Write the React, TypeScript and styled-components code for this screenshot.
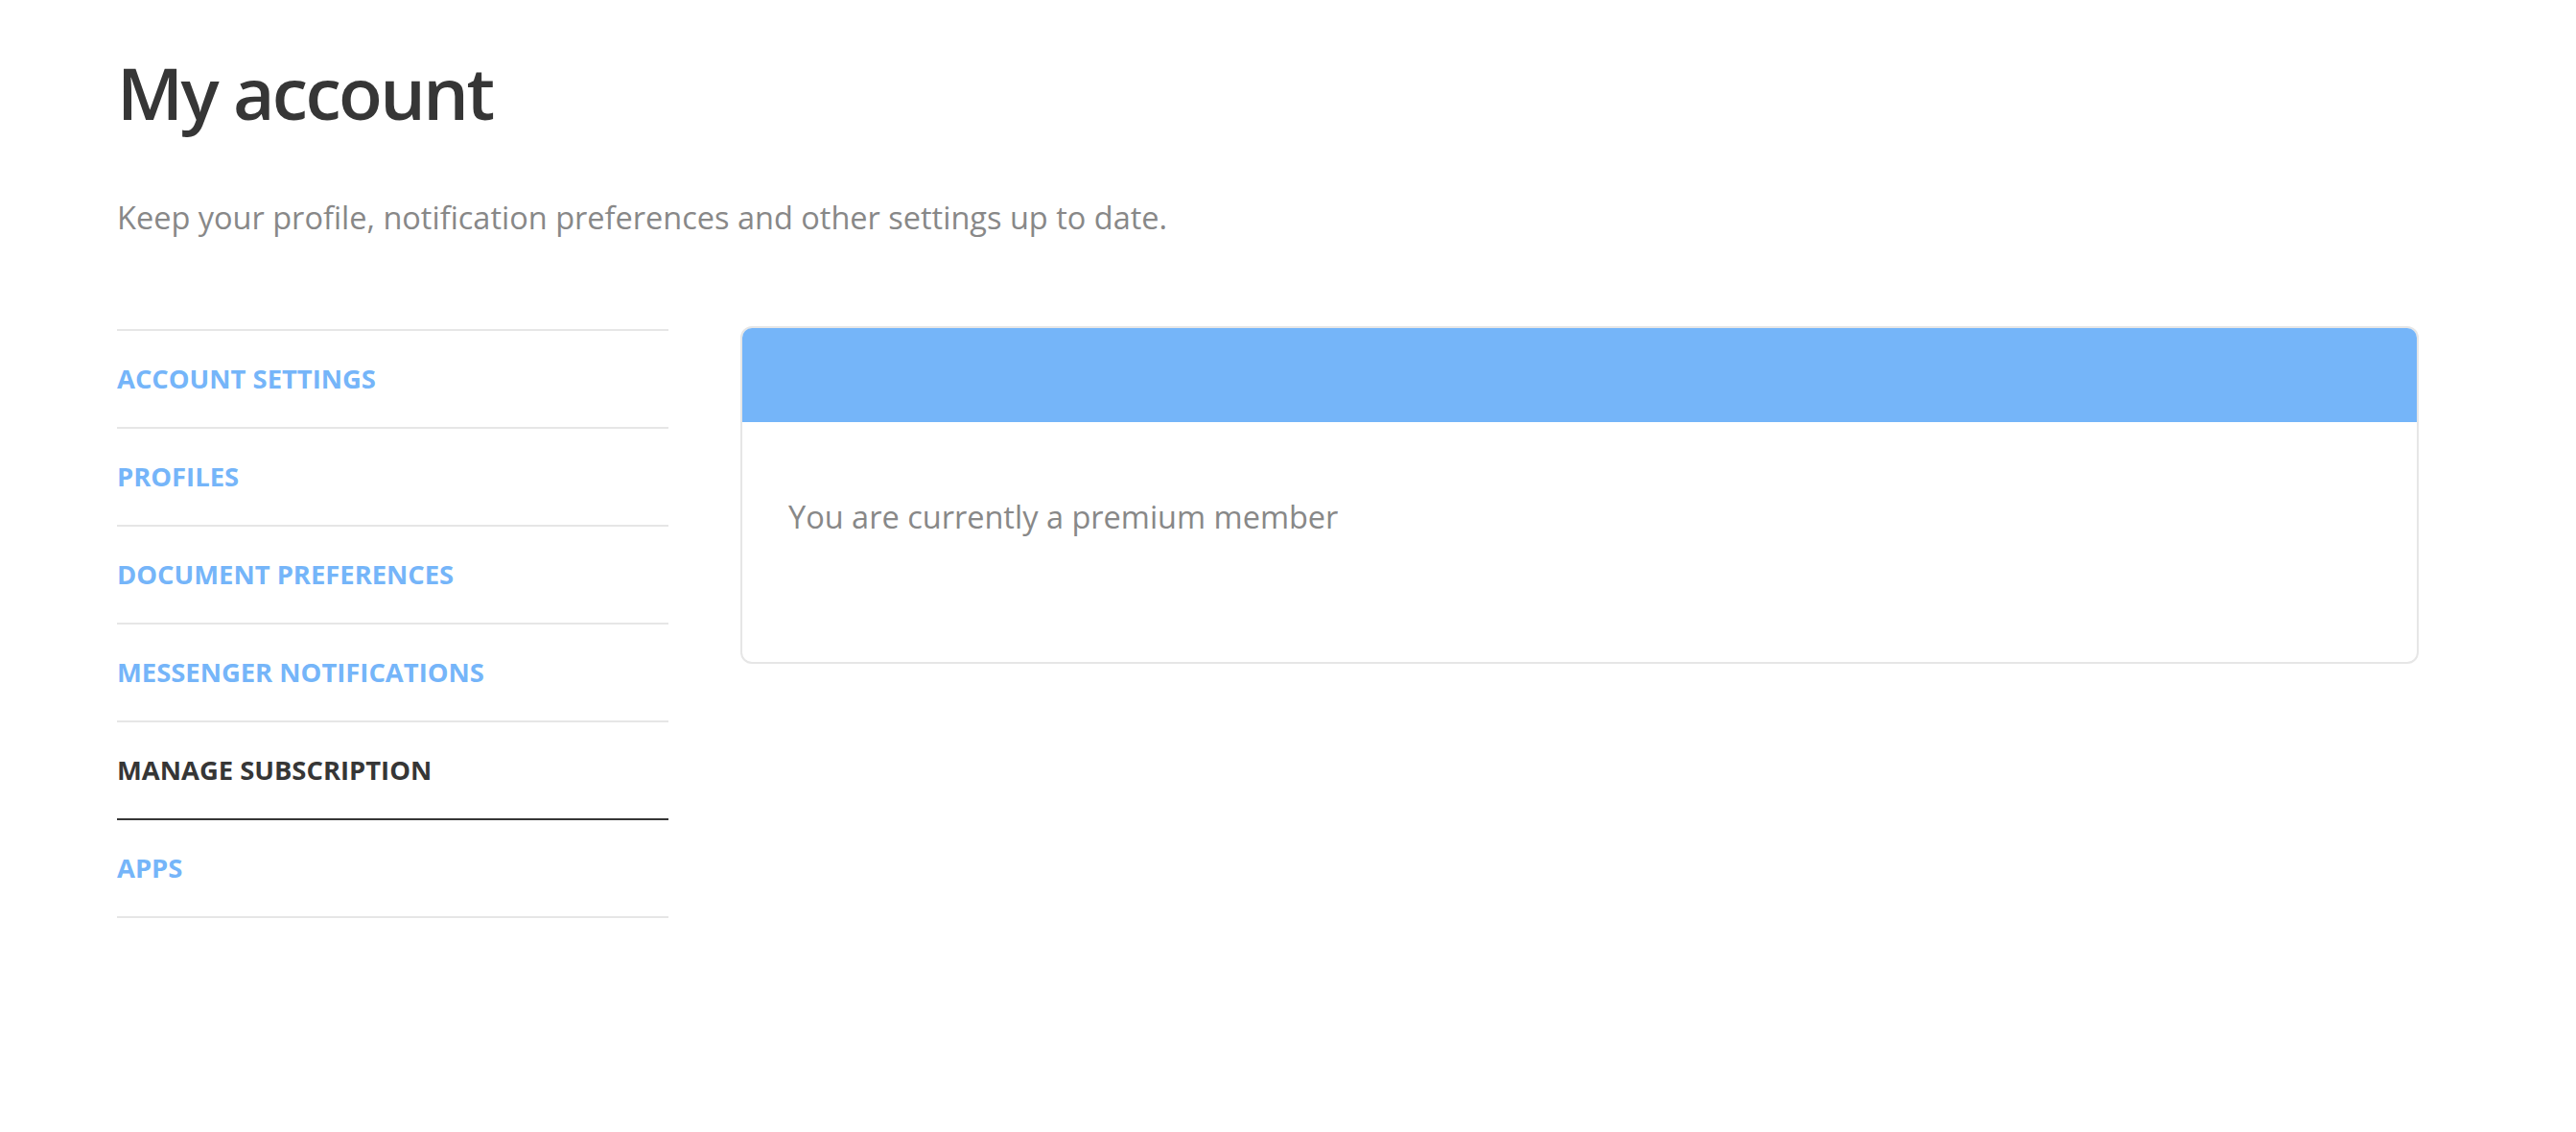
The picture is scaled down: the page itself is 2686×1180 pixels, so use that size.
import styled, { createGlobalStyle } from "styled-components";

const GlobalStyle = createGlobalStyle`
  html, body {
    margin: 0;
    padding: 0;
    background: #ffffff;
    font-family: "Open Sans", "Liberation Sans", sans-serif;
  }
  *, *::before, *::after {
    box-sizing: border-box;
  }
`;

const Page = styled.div`
  padding: 59px 122px 0 122px;
`;

const Title = styled.h1`
  margin: 0;
  font-size: 75px;
  line-height: 1;
  font-weight: 600;
  letter-spacing: -2.6px;
  color: #363636;
`;

const Subtitle = styled.p`
  margin: 77px 0 0 0;
  font-size: 32.5px;
  line-height: 1;
  font-weight: 400;
  color: #888888;
`;

const Layout = styled.div`
  display: flex;
  align-items: flex-start;
  gap: 75px;
  margin-top: 96px;
`;

const Nav = styled.ul`
  list-style: none;
  margin: 3px 0 0 0;
  padding: 0;
  width: 575px;
  flex-shrink: 0;
  border-top: 2px solid #e6e6e6;
`;

const NavItem = styled.li<{ $active?: boolean }>`
  display: flex;
  align-items: center;
  height: 102px;
  border-bottom: 2px solid ${(p) => (p.$active ? "#363636" : "#e6e6e6")};
  font-size: 27.4px;
  font-weight: 700;
  color: ${(p) => (p.$active ? "#363636" : "#75b5f9")};
  cursor: pointer;
`;

const Card = styled.div`
  flex: 1;
  max-width: 1750px;
  border: 2px solid #e6e6e6;
  border-radius: 12px;
  overflow: hidden;
`;

const CardHeader = styled.div`
  height: 100px;
  margin: -2px -2px 0 -2px;
  background: #75b5f9;
  border-radius: 12px 12px 0 0;
`;

const CardBody = styled.div`
  padding: 83px 48px 135px 48px;
  font-size: 32.5px;
  line-height: 1;
  color: #888888;
`;

const items = [
  "ACCOUNT SETTINGS",
  "PROFILES",
  "DOCUMENT PREFERENCES",
  "MESSENGER NOTIFICATIONS",
  "MANAGE SUBSCRIPTION",
  "APPS",
];

export default function App() {
  return (
    <Page>
      <GlobalStyle />
      <Title>My account</Title>
      <Subtitle>
        Keep your profile, notification preferences and other settings up to
        date.
      </Subtitle>
      <Layout>
        <Nav>
          {items.map((label) => (
            <NavItem key={label} $active={label === "MANAGE SUBSCRIPTION"}>
              {label}
            </NavItem>
          ))}
        </Nav>
        <Card>
          <CardHeader />
          <CardBody>You are currently a premium member</CardBody>
        </Card>
      </Layout>
    </Page>
  );
}
